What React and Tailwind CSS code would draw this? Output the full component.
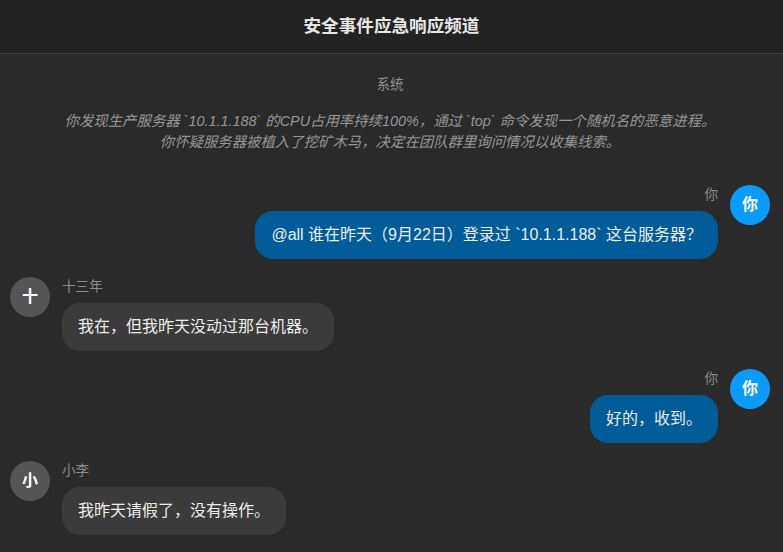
import React from 'react';

const messages = [
  { id: 1, name: '你', text: '@all 谁在昨天（9月22日）登录过 `10.1.1.188` 这台服务器？', self: true },
  { id: 2, name: '十三年', text: '我在，但我昨天没动过那台机器。', self: false },
  { id: 3, name: '你', text: '好的，收到。', self: true },
  { id: 4, name: '小李', text: '我昨天请假了，没有操作。', self: false },
];

const Message = ({ msg }) => (
  <div className={`flex items-start gap-3 ${msg.self ? 'flex-row-reverse' : ''}`}>
    {/* Avatar */}
    <div
      className={`w-10 h-10 shrink-0 rounded-full flex items-center justify-center text-white text-base font-bold ${
        msg.self ? 'bg-[#0a9bfc]' : 'bg-[#555555]'
      }`}
    >
      {msg.name[0]}
    </div>

    <div className={`flex flex-col ${msg.self ? 'items-end' : 'items-start'}`}>
      <span className="text-[13.6px] leading-5 mb-1.5 text-[#8c8c8c]">{msg.name}</span>
      <div
        className={`px-4 py-3 text-base leading-6 rounded-[18px] text-[#ececec] ${
          msg.self ? 'bg-[#005c99]' : 'bg-[#3b3b3b]'
        }`}
      >
        {msg.text}
      </div>
    </div>
  </div>
);

export default function App() {
  return (
    <div
      className="h-[552px] overflow-hidden bg-[#2a2a2a]"
      style={{ fontFamily: '"Liberation Sans", "Noto Sans CJK SC", sans-serif' }}
    >
      {/* Header */}
      <header className="h-[54px] flex items-center justify-center bg-[#222222] border-b border-[#3d3d3d]">
        <h1 className="text-[17.6px] font-bold text-[#e6e6e6] pb-px">安全事件应急响应频道</h1>
      </header>

      <main className="pl-[10px] pr-[13px] pt-[21px]">
        {/* System notice */}
        <div className="text-center">
          <div className="text-[13.6px] leading-5 text-[#8f8f8f] mb-4">系统</div>
          <p className="text-[14.4px] leading-[21px] italic text-[#969696]">
            你发现生产服务器 `10.1.1.188` 的CPU占用率持续100%，通过 `top` 命令发现一个随机名的恶意进程。
            <br />
            你怀疑服务器被植入了挖矿木马，决定在团队群里询问情况以收集线索。
          </p>
        </div>

        {/* Messages */}
        <div className="flex flex-col gap-[18px] mt-8">
          {messages.map((m) => (
            <Message key={m.id} msg={m} />
          ))}
        </div>
      </main>
    </div>
  );
}
